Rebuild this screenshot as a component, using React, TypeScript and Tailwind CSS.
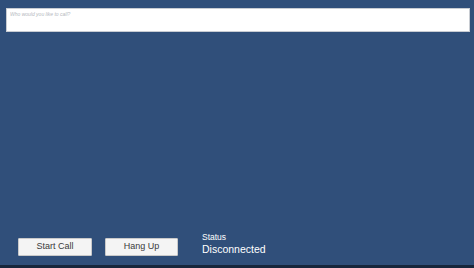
export default function App() {
  return (
    <div
      className="flex h-[268px] w-[474px] flex-col bg-[#304f7a]"
      style={{ fontFamily: '"Liberation Sans", Arial, sans-serif' }}
    >
      <div className="px-[6px] pt-[8px]">
        <input
          type="text"
          placeholder="Who would you like to call?"
          className="block h-[24px] w-[464px] border border-[#c8ccd2] bg-white px-[3px] pb-[14px] pt-[2px] text-[5px] italic text-[#333] placeholder-[#b4b8be] outline-none"
        />
      </div>

      <div className="flex-1" />

      <div className="flex items-end pb-[9px] pl-[18px]">
        <button className="h-[18px] w-[74px] rounded-[1px] border border-[#c9c9c9] bg-[#f4f4f4] text-[9px] text-[#3a3a3a]">
          Start Call
        </button>
        <button className="ml-[13px] h-[18px] w-[73px] rounded-[1px] border border-[#c9c9c9] bg-[#f4f4f4] text-[9px] text-[#3a3a3a]">
          Hang Up
        </button>
        <div className="ml-[24px] flex flex-col text-white">
          <span className="text-[8.5px] leading-[11px]">Status</span>
          <span className="text-[10.5px] leading-[13px]">Disconnected</span>
        </div>
      </div>

      <div className="h-[3px] bg-[#17263b]" />
    </div>
  );
}
